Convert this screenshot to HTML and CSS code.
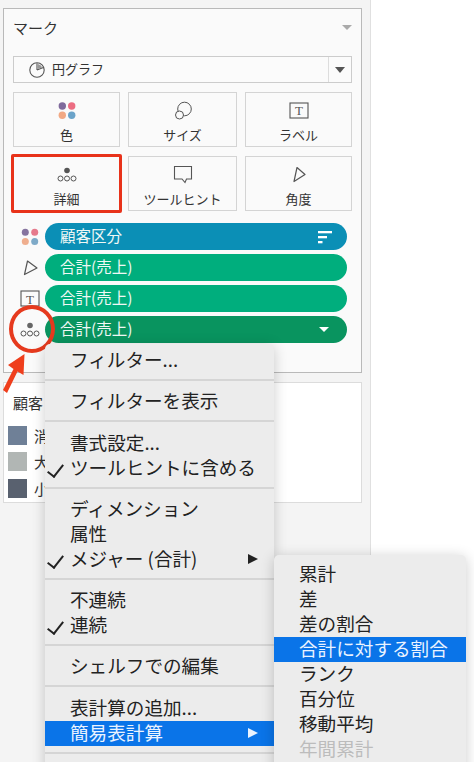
FILE: index.html
```html
<!DOCTYPE html>
<html lang="ja">
<head>
<meta charset="utf-8">
<title>マーク</title>
<link rel="stylesheet" href="styles.css">
</head>
<body>
<div class="page">
  <aside class="panel">
    <section class="marks">
      <div class="marks-head"><span>マーク</span><i class="tri tri-light"></i></div>
      <div class="select">
        <svg class="pie" viewBox="0 0 18 18" width="18" height="18"><circle cx="9" cy="9" r="7.2"/><path d="M9 9V2.2M9 9l6.4-2.4"/><path class="pie-fill" d="M10 8V3a6 6 0 0 1 4.300 3.400z"/></svg>
        <span class="select-label">円グラフ</span>
        <span class="select-arrow"><i class="tri tri-dark"></i></span>
      </div>
      <div class="mark-grid">
        <div class="mark-btn">
          <svg class="ic" viewBox="0 0 20 20" width="20" height="20"><circle cx="5.300" cy="5" r="3.700" fill="#7f6a9c"/><circle cx="14.700" cy="5" r="3.700" fill="#ec6d82"/><circle cx="5.300" cy="14.300" r="3.700" fill="#f2a984"/><circle cx="14.700" cy="14.300" r="3.700" fill="#6ba3c9"/></svg>
          <span>色</span>
        </div>
        <div class="mark-btn">
          <svg class="ic" viewBox="0 0 20 20" width="20" height="20" fill="none" stroke="#555" stroke-width="1"><circle cx="11.500" cy="8" r="6.800"/><circle cx="6.500" cy="14" r="4" fill="#fafafa"/></svg>
          <span>サイズ</span>
        </div>
        <div class="mark-btn">
          <svg class="ic" viewBox="0 0 20 20" width="20" height="20"><rect x="1" y="2" width="18" height="15" fill="none" stroke="#555" stroke-width="1.100"/><text x="10" y="14" class="ic-t">T</text></svg>
          <span>ラベル</span>
        </div>
        <div class="mark-btn selected">
          <svg class="ic" viewBox="0 0 22 20" width="22" height="20"><circle cx="11" cy="5.500" r="2.800" fill="#555"/><g fill="none" stroke="#555" stroke-width="1"><circle cx="4.500" cy="13.500" r="2.500"/><circle cx="11" cy="13.500" r="2.500"/><circle cx="17.500" cy="13.500" r="2.500"/></g></svg>
          <span>詳細</span>
        </div>
        <div class="mark-btn">
          <svg class="ic" viewBox="0 0 20 20" width="20" height="20" fill="none" stroke="#555" stroke-width="1.100"><path d="M1.500 1.500h17v12.500h-5l-1.500 3.500-3-3.500h-7.500z"/></svg>
          <span>ツールヒント</span>
        </div>
        <div class="mark-btn">
          <svg class="ic" viewBox="0 0 20 20" width="20" height="20" fill="none" stroke="#555" stroke-width="1.200"><path d="M8 2.500l8 7-11 7z" stroke-linejoin="round"/></svg>
          <span>角度</span>
        </div>
      </div>
      <div class="shelf">
        <div class="shelf-row">
          <svg class="shelf-ic" viewBox="0 0 20 20" width="20" height="20"><circle cx="5.300" cy="5.300" r="3.500" fill="#86749f"/><circle cx="14.700" cy="5.300" r="3.500" fill="#e67a8c"/><circle cx="5.300" cy="14.500" r="3.500" fill="#efae8e"/><circle cx="14.700" cy="14.500" r="3.500" fill="#7eaac8"/></svg>
          <div class="pill pill-blue"><span>顧客区分</span>
            <svg viewBox="0 0 14 14" width="14" height="14" fill="#fff"><rect x="0" y="1" width="14" height="2.300"/><rect x="0" y="6" width="9" height="2.300"/><rect x="0" y="11" width="4.500" height="2.300"/></svg>
          </div>
        </div>
        <div class="shelf-row">
          <svg class="shelf-ic" viewBox="0 0 20 20" width="20" height="20" fill="none" stroke="#555" stroke-width="1.200"><path d="M7.500 3l9.500 7-12.500 6.500z" stroke-linejoin="round"/></svg>
          <div class="pill pill-green"><span>合計(売上)</span></div>
        </div>
        <div class="shelf-row">
          <svg class="shelf-ic" viewBox="0 0 20 20" width="20" height="20"><rect x="1" y="2" width="18" height="15" fill="none" stroke="#555" stroke-width="1.100"/><text x="10" y="14.500" class="ic-t">T</text></svg>
          <div class="pill pill-green"><span>合計(売上)</span></div>
        </div>
        <div class="shelf-row">
          <svg class="shelf-ic shelf-ic-wide" viewBox="0 0 22 20" width="22" height="20"><circle cx="11" cy="5.500" r="2.800" fill="#666"/><g fill="none" stroke="#555" stroke-width="1"><circle cx="4.500" cy="13.500" r="2.500"/><circle cx="11" cy="13.500" r="2.500"/><circle cx="17.500" cy="13.500" r="2.500"/></g></svg>
          <div class="pill pill-dark"><span>合計(売上)</span><i class="tri tri-white"></i></div>
        </div>
      </div>
    </section>
    <section class="legend">
      <div class="legend-title">顧客</div>
      <div class="legend-row"><i class="sw sw-a"></i><span>消</span></div>
      <div class="legend-row"><i class="sw sw-b"></i><span>大</span></div>
      <div class="legend-row"><i class="sw sw-c"></i><span>小</span></div>
    </section>
  </aside>

  <svg class="callout" viewBox="0 0 60 60" width="60" height="60" aria-hidden="true">
    <path class="callout-arrow" d="M24.500 14L8 25l5.500 4L3 50l4 3L17.500 31.500l6 3.500z"/>
  </svg>
  <div class="ring"></div>

  <div class="menu menu-main">
    <div class="item">フィルター...</div>
    <div class="sep"></div>
    <div class="item">フィルターを表示</div>
    <div class="sep"></div>
    <div class="item">書式設定...</div>
    <div class="item checked">ツールヒントに含める</div>
    <div class="sep"></div>
    <div class="item">ディメンション</div>
    <div class="item">属性</div>
    <div class="item checked has-sub">メジャー (合計)</div>
    <div class="sep"></div>
    <div class="item">不連続</div>
    <div class="item checked">連続</div>
    <div class="sep"></div>
    <div class="item">シェルフでの編集</div>
    <div class="sep"></div>
    <div class="item">表計算の追加...</div>
    <div class="item active has-sub">簡易表計算</div>
    <div class="sep"></div>
  </div>

  <div class="menu menu-sub">
    <div class="item">累計</div>
    <div class="item">差</div>
    <div class="item">差の割合</div>
    <div class="item active">合計に対する割合</div>
    <div class="item">ランク</div>
    <div class="item">百分位</div>
    <div class="item">移動平均</div>
    <div class="item disabled">年間累計</div>
  </div>
</div>
</body>
</html>
```
FILE: styles.css
```css
* { box-sizing: border-box; }
html, body { margin: 0; padding: 0; background: #fff; }
body { font-family: "Noto Sans CJK JP", "Noto Sans", sans-serif; color: #333; }
.page { position: relative; width: 474px; height: 762px; overflow: hidden; background: #fff; }

.panel { width: 371px; height: 762px; padding: 8px 8px 0 3px; background: #f4f4f4; border-right: 1px solid #e0e0e0; }

.marks { height: 365px; padding: 0 9px; background: #fafafa; border: 1px solid #b9b9b9; }
.marks-head { display: flex; justify-content: space-between; align-items: center; height: 47px; padding: 0 1px 10px 0; font-size: 15px; }
.tri { display: block; width: 0; height: 0; border-left: 5px solid transparent; border-right: 5px solid transparent; }
.tri-light { border-top: 5px solid #aaa; margin-right: -1px; }
.tri-dark { border-top: 6px solid #555; }
.tri-white { border-top: 5px solid #fff; }

.select { display: flex; align-items: center; height: 27px; background: #fbfbfb; border: 1px solid #ccc; padding-left: 14px; font-size: 13px; }
.pie { fill: none; stroke: #555; stroke-width: 1.100; }
.pie-fill { fill: #999; stroke: none; }
.select-label { margin-left: 6px; padding-bottom: 2px; flex: 1; }
.select-arrow { display: flex; align-items: center; justify-content: center; width: 23px; height: 100%; border-left: 1px solid #ddd; }

.mark-grid { display: grid; grid-template-columns: 107px 109px 107px; grid-auto-rows: 55px; column-gap: 8px; row-gap: 9px; margin-top: 9px; }
.mark-btn { position: relative; display: flex; flex-direction: column; align-items: center; padding-top: 8px; background: #fafafa; border: 1px solid #d4d4d4; font-size: 13px; line-height: 18px; }
.mark-btn span { margin-top: 5px; }
.ic { display: block; }
.ic-t { font-family: "Liberation Serif", serif; font-size: 13px; text-anchor: middle; fill: #555; }
.selected::after { content: ""; position: absolute; left: -3px; right: -3px; top: -3px; bottom: -3px; border: 3px solid #e8321a; border-radius: 2px; }

.shelf { display: flex; flex-direction: column; gap: 4px; margin-top: 12px; }
.shelf-row { display: flex; align-items: center; height: 27px; margin-left: 7px; }
.shelf-ic { flex: none; width: 20px; }
.shelf-ic-wide { width: 22px; margin: 0 -1px; }
.pill { display: flex; align-items: center; justify-content: space-between; flex: none; width: 302px; height: 27px; margin-left: 5px; padding: 0 18px 0 15px; border-radius: 13.500px; color: #f0f8f5; font-size: 15.500px; }
.pill span { margin-bottom: 3px; }
.pill svg { margin-right: -3px; }
.pill-blue { background: #0b8fb6; }
.pill-green { background: #00ae7d; }
.pill-dark { background: #09945f; }

.legend { height: 121px; margin-top: 9px; padding: 10px 5px 0 4px; background: #fff; border: 1px solid #dcdcdc; font-size: 15px; }
.legend-title { height: 29px; padding-left: 5px; line-height: 20px; white-space: nowrap; }
.legend-row { display: flex; align-items: center; height: 26.500px; }
.legend-row span { margin-left: 7px; }
.sw { display: block; width: 19px; height: 19px; }
.sw-a { background: #6f8097; }
.sw-b { background: #b1b6b4; }
.sw-c { background: #59616f; }

.ring { position: absolute; left: 9px; top: 305px; width: 46px; height: 48px; border: 4px solid #e63a1e; border-radius: 50%; }
.callout { position: absolute; left: 0; top: 340px; }
.callout-arrow { fill: #ef3e1c; }

.menu { position: absolute; background: #ececec; border-radius: 5px; box-shadow: 0 2px 14px rgba(0,0,0,.2); color: #222; font-size: 18.600px; line-height: 22px; }
.menu-main { left: 45px; top: 344px; width: 229px; height: 440px; padding-top: 4px; }
.menu-sub { left: 274px; top: 555px; width: 192px; height: 230px; padding-top: 7px; }
.item { position: relative; height: 25px; padding-left: 25px; white-space: nowrap; }
.sep { height: 16.300px; position: relative; }
.sep::after { content: ""; position: absolute; left: 0; right: 0; top: 6px; height: 2px; background: #d5d5d5; }
.active { background: #0a74e8; color: #eaf3ff; }
.disabled { color: #bcbcbc; }
.checked::before { content: ""; position: absolute; left: 6px; top: 5px; width: 7px; height: 14px; border-right: 2.500px solid #222; border-bottom: 2.500px solid #222; transform: rotate(38deg); }
.has-sub::after { content: ""; position: absolute; right: 16px; top: 7px; border-left: 10px solid #222; border-top: 5.500px solid transparent; border-bottom: 5.500px solid transparent; }
.active.has-sub::after { border-left-color: #eaf3ff; }
```
